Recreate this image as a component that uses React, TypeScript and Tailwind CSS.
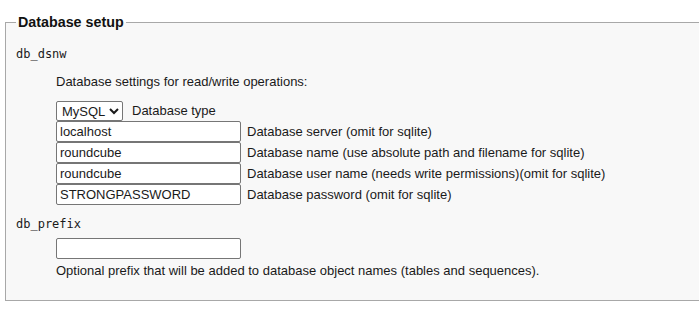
const rows = [
  { value: "localhost", label: "Database server (omit for sqlite)" },
  { value: "roundcube", label: "Database name (use absolute path and filename for sqlite)" },
  { value: "roundcube", label: "Database user name (needs write permissions)(omit for sqlite)" },
  { value: "STRONGPASSWORD", label: "Database password (omit for sqlite)" },
];

export default function App() {
  return (
    <div className="w-[699px] h-[318px] overflow-hidden bg-white font-['Liberation_Sans',Arial,sans-serif] text-[13px] text-[#1a1a1a]">
      <fieldset className="mt-[13px] ml-[5px] w-[760px] border border-[#a8a8a8] bg-[#f8f8f8] pl-[10px] pb-[21px]">
        <legend className="px-[2px] text-[14.3px] font-bold leading-[18px] text-[#111]">
          Database setup
        </legend>
        <div className="mt-[15px] font-['DejaVu_Sans_Mono',monospace] text-[12px] leading-[17px]">db_dsnw</div>
        <div className="pl-[40px]">
          <p className="mt-[11px] leading-[16px]">Database settings for read/write operations:</p>
          <div className="mt-[11px] flex items-center h-[20px]">
            <select className="h-[20px] border border-[#767676] rounded-[2px] bg-white pl-[1px] text-[13px]">
              <option>MySQL</option>
            </select>
            <span className="ml-[9px]">Database type</span>
          </div>
          <div className="flex flex-col">
            {rows.map((row, i) => (
              <div key={i} className="flex items-center h-[21px]">
                <input
                  readOnly
                  value={row.value}
                  className="h-[21px] w-[185px] border border-[#767676] rounded-[2px] bg-white px-[3px] text-[13px]"
                />
                <span className="ml-[6px]">{row.label}</span>
              </div>
            ))}
          </div>
        </div>
        <div className="mt-[11px] font-['DejaVu_Sans_Mono',monospace] text-[12px] leading-[17px]">db_prefix</div>
        <div className="pl-[40px]">
          <input
            readOnly
            value=""
            className="mt-[5px] block h-[21px] w-[185px] border border-[#767676] rounded-[2px] bg-white px-[3px] text-[13px]"
          />
          <p className="mt-[4px] leading-[16px]">Optional prefix that will be added to database object names (tables and sequences).</p>
        </div>
      </fieldset>
    </div>
  );
}
